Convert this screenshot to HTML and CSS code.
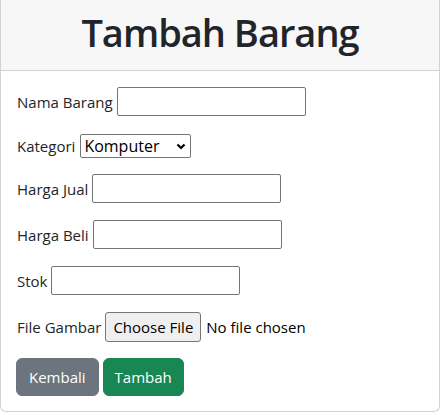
FILE: index.html
```html
<!DOCTYPE html>
<html lang="id">
<head>
<meta charset="utf-8">
<title>Tambah Barang</title>
<link rel="stylesheet" href="styles.css">
</head>
<body>
<div class="card">
  <div class="card-header">
    <h1 class="title">Tambah Barang</h1>
  </div>
  <form class="card-body">
    <div class="row">
      <label for="nama">Nama Barang</label>
      <input class="text" id="nama" type="text">
    </div>
    <div class="row row-select">
      <label for="kategori">Kategori</label>
      <span class="select-wrap">
        <select id="kategori" class="select">
          <option>Komputer</option>
          <option>Laptop</option>
        </select>
        <svg class="chev" width="10" height="7" viewBox="0 0 10 7"><path d="M1.5 1.5 L5 5 L8.5 1.5" fill="none" stroke="#000" stroke-width="2.2"/></svg>
      </span>
    </div>
    <div class="row">
      <label for="jual">Harga Jual</label>
      <input class="text" id="jual" type="text">
    </div>
    <div class="row">
      <label for="beli">Harga Beli</label>
      <input class="text" id="beli" type="text">
    </div>
    <div class="row">
      <label for="stok">Stok</label>
      <input class="text" id="stok" type="text">
    </div>
    <div class="row">
      <label for="gambar">File Gambar</label>
      <input class="file" id="gambar" type="file">
    </div>
    <div class="actions">
      <a class="btn btn-secondary" href="#">Kembali</a>
      <button class="btn btn-success" type="button">Tambah</button>
    </div>
  </form>
</div>
</body>
</html>
```
FILE: styles.css
```css
* { box-sizing: border-box; }
html, body {
  margin: 0;
  padding: 0;
  background: #fff;
}
body {
  font-family: "Open Sans", "Noto Sans", sans-serif;
  font-size: 15px;
  line-height: 24px;
  color: #212529;
}
.card {
  width: 440px;
  border: 1px solid #d2d2d2;
  border-top: none;
  border-radius: 0 0 6px 6px;
  background: #fff;
}
.card-header {
  background: #f7f7f7;
  border-bottom: 1px solid #d2d2d2;
  height: 71px;
  padding-top: 8px;
}
.title {
  margin: 0;
  text-align: center;
  font-size: 38px;
  line-height: 48px;
  letter-spacing: -1px;
  font-weight: 600;
  color: #212529;
}
.card-body {
  display: block;
  margin: 0;
  padding: 16px 16px 15px 16px;
}
.row {
  display: flex;
  align-items: center;
  gap: 4px;
  height: 30px;
  margin-bottom: 16px;
}
.row-select { height: 25px; }
.row label { white-space: nowrap; }
.text {
  width: 189px;
  height: 29px;
  border: 1px solid #767676;
  border-radius: 2px;
  padding: 1px 2px;
  font: inherit;
  background: #fff;
  margin: 0 0 1px 0;
}
.select-wrap {
  position: relative;
  display: inline-block;
  height: 24px;
  margin-left: 1px;
}
.select {
  appearance: none;
  -webkit-appearance: none;
  width: 111px;
  height: 24px;
  border: 1px solid #767676;
  border-radius: 2px;
  padding: 0 0 0 3px;
  font: inherit;
  font-size: 16px;
  line-height: 22px;
  color: #000;
  background: #fff;
  margin: 0;
}
.chev {
  position: absolute;
  right: 5px;
  top: 9px;
  pointer-events: none;
}
.file {
  font: inherit;
  color: #000;
  margin: 0 0 1px 0;
}
.file::file-selector-button {
  font: inherit;
  color: #000;
  height: 30px;
  padding: 0 7px;
  margin-right: 5px;
  background: #efefef;
  border: 1px solid #767676;
  border-radius: 3px;
}
.actions {
  display: flex;
  gap: 4px;
  margin-left: -1px;
}
.btn {
  display: inline-flex;
  align-items: center;
  justify-content: center;
  height: 38px;
  padding: 0 12px;
  border: 1px solid transparent;
  border-radius: 6px;
  font: inherit;
  color: #fff;
  text-decoration: none;
  cursor: pointer;
}
.btn-secondary { background: #6c757d; border-color: #6c757d; }
.btn-success { background: #198754; border-color: #198754; padding: 0 11px; }
```
